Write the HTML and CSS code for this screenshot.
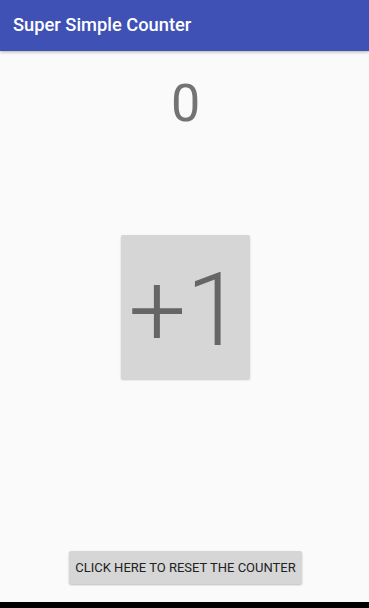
FILE: index.html
```html
<!DOCTYPE html>
<html>
<head>
<meta charset="utf-8">
<link rel="stylesheet" href="styles.css">
</head>
<body>
<div class="screen">
  <header class="appbar"><span class="title">Super Simple Counter</span></header>
  <main class="content">
    <div class="count">0</div>
    <button class="plus">+1</button>
    <div class="spacer"></div>
    <button class="reset">CLICK HERE TO RESET THE COUNTER</button>
  </main>
  <div class="navbar"></div>
</div>
</body>
</html>
```
FILE: styles.css
```css
html, body {
  margin: 0;
  padding: 0;
  background: #fafafa;
}
.screen {
  width: 369px;
  height: 608px;
  display: flex;
  flex-direction: column;
  font-family: Roboto, "Noto Sans", sans-serif;
  overflow: hidden;
}
.appbar {
  height: 51px;
  flex: none;
  background: #3f51b5;
  display: flex;
  align-items: center;
  padding-left: 13px;
  box-shadow: 0 1px 3px rgba(0,0,0,0.3);
  position: relative;
  z-index: 1;
}
.title {
  color: #fff;
  font-size: 18.3px;
  font-weight: 500;
  padding-bottom: 2px;
}
.content {
  flex: 1;
  display: flex;
  flex-direction: column;
  align-items: center;
}
.count {
  margin-top: 27px;
  font-size: 52px;
  line-height: 52px;
  color: #737373;
  padding-left: 2px;
}
.plus {
  margin-top: 105px;
  width: 129px;
  height: 144px;
  border: none;
  border-radius: 2px;
  background: #d6d6d6;
  box-shadow: 0 1px 2px rgba(0,0,0,0.2);
  color: #666;
  font-family: Roboto, sans-serif;
  font-weight: 300;
  font-size: 102px;
  line-height: 1;
  padding: 6px 0 0 0;
  margin-left: 2px;
}
.spacer { flex: 1; }
.reset {
  width: 233px;
  height: 33px;
  margin-bottom: 18px;
  margin-left: 2px;
  border: none;
  border-radius: 2px;
  background: #d6d6d6;
  box-shadow: 0 1px 2px rgba(0,0,0,0.25);
  color: #222;
  font-family: Roboto, sans-serif;
  font-weight: 400;
  font-size: 13px;
  padding: 0;
}
.navbar {
  height: 6px;
  flex: none;
  background: #000;
}
```
